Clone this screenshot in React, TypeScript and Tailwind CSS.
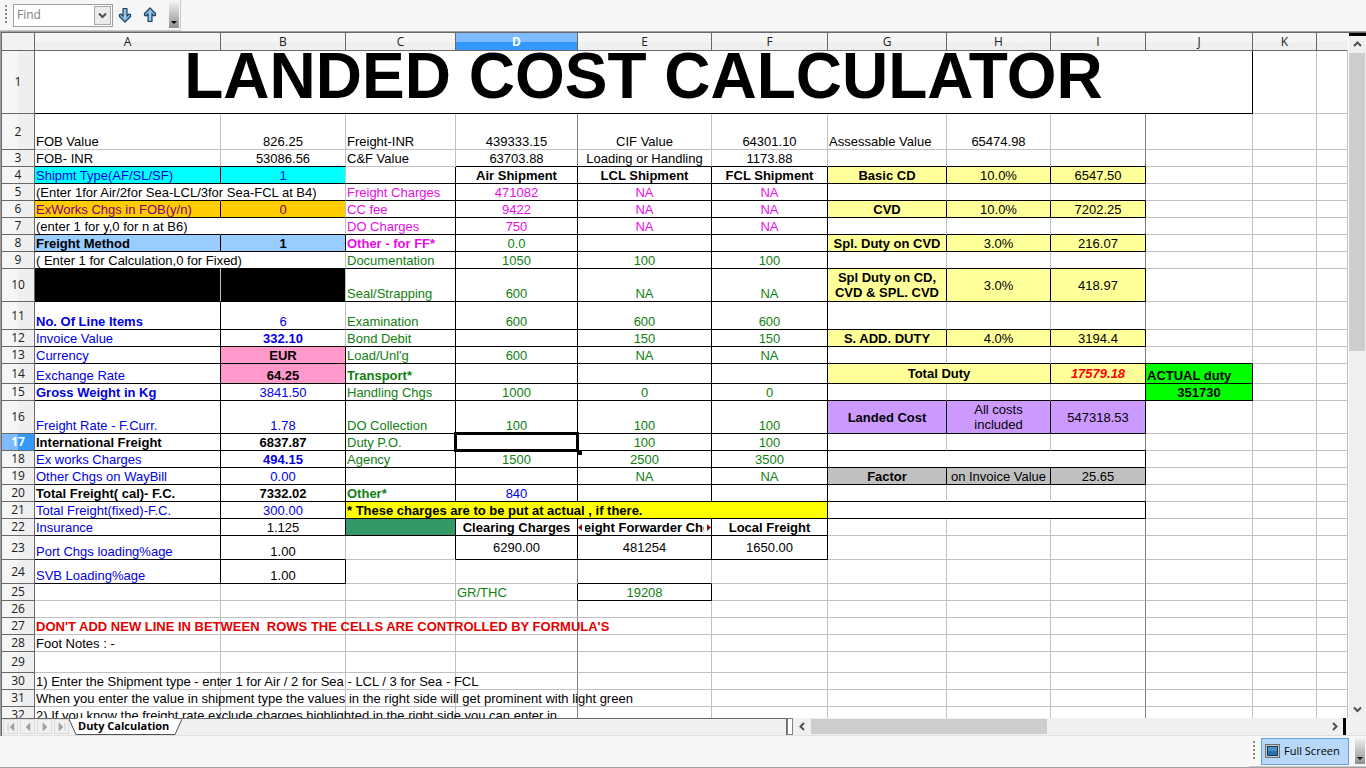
import { clsx } from "clsx"

type Cell = {
  text?: string
  className?: string
  span?: number
  cut?: boolean
  selected?: boolean
}

type Row = {
  height: string
  // one letter for each column A to L: k black, d dark grey, g grid grey, n none
  right: string
  bottom: string
  cells: Record<string, Cell>
}

const LETTERS = "ABCDEFGHIJKL"

const WIDTHS = [
  "w-[186px]", "w-[125px]", "w-[110px]", "w-[122px]", "w-[134px]", "w-[116px]",
  "w-[119px]", "w-[104px]", "w-[95px]", "w-[107px]", "w-[64px]", "",
]

const RIGHT: Record<string, string> = {
  k: "border-r-black",
  d: "border-r-[#808080]",
  g: "border-r-[#c0c0c0]",
  n: "border-r-transparent",
}

const BOTTOM: Record<string, string> = {
  k: "border-b-black",
  g: "border-b-[#c0c0c0]",
}

const H17 = "h-[17px]"
const H33 = "h-[33px]"

const BLUE = "text-[#0000e6]"
const GREEN = "text-[#108010]"
const PINK = "text-[#e80ce8]"
const MID = "align-middle text-center"
const YELLOW = "bg-[#ffff99] align-middle text-center"
const LILAC = "bg-[#cc99ff] align-middle text-center"
const GREY = "bg-[#c0c0c0] align-middle text-center"

const left = (text: string, className = ""): Cell => ({ text, className })
const mid = (text: string, className = ""): Cell => ({ text, className: clsx("text-center", className) })

const ALL = "kkkkkkkkkggg"
const NONE = "gggggggggggg"
const PLAIN = "gggdggggdggg"

const rows: Row[] = [
  {
    height: "h-[63px]", right: "kkkkkkkkkkgg", bottom: "kkkkkkkkkkgg",
    cells: { A: { text: "LANDED COST CALCULATOR", span: 10, className: "text-center align-top font-bold text-[64px] leading-[50px]" } },
  },
  {
    height: "h-[36px]", right: PLAIN, bottom: NONE,
    cells: {
      A: left("FOB Value"), B: mid("826.25"), C: left("Freight-INR"), D: mid("439333.15"),
      E: mid("CIF Value"), F: mid("64301.10"), G: left("Assessable Value"), H: mid("65474.98"),
    },
  },
  {
    height: H17, right: PLAIN, bottom: "kkgkkkkkkggg",
    cells: { A: left("FOB- INR"), B: mid("53086.56"), C: left("C&F Value"), D: mid("63703.88"), E: mid("Loading or Handling"), F: mid("1173.88") },
  },
  {
    height: H17, right: "kgkkkkkkkggg", bottom: ALL,
    cells: {
      A: left("Shipmt Type(AF/SL/SF)", clsx("bg-[#00ffff]", BLUE)), B: mid("1", clsx("bg-[#00ffff]", BLUE)),
      D: mid("Air Shipment", "font-bold"), E: mid("LCL Shipment", "font-bold"), F: mid("FCL Shipment", "font-bold"),
      G: mid("Basic CD", clsx(YELLOW, "font-bold")), H: mid("10.0%", YELLOW), I: mid("6547.50", YELLOW),
    },
  },
  {
    height: H17, right: "ngkkkkggdggg", bottom: ALL,
    cells: { A: left("(Enter 1for Air/2for Sea-LCL/3for Sea-FCL at B4)"), C: left("Freight Charges", PINK), D: mid("471082", PINK), E: mid("NA", PINK), F: mid("NA", PINK) },
  },
  {
    height: H17, right: "kgkkkkkkkggg", bottom: ALL,
    cells: {
      A: left("ExWorks Chgs in FOB(y/n)", "bg-[#ffcc00] text-[#800080]"), B: mid("0", "bg-[#ffcc00] text-[#800080]"),
      C: left("CC fee", PINK), D: mid("9422", PINK), E: mid("NA", PINK), F: mid("NA", PINK),
      G: mid("CVD", clsx(YELLOW, "font-bold")), H: mid("10.0%", YELLOW), I: mid("7202.25", YELLOW),
    },
  },
  {
    height: H17, right: "ngkkkkggdggg", bottom: ALL,
    cells: { A: left("(enter 1 for y,0 for n at B6)"), C: left("DO Charges", PINK), D: mid("750", PINK), E: mid("NA", PINK), F: mid("NA", PINK) },
  },
  {
    height: H17, right: "kkkkkkkkkggg", bottom: ALL,
    cells: {
      A: left("Freight Method", "bg-[#99ccff] font-bold"), B: mid("1", "bg-[#99ccff] font-bold"),
      C: left("Other - for FF*", clsx(PINK, "font-bold")), D: mid("0.0", GREEN),
      G: mid("Spl. Duty on CVD", clsx(YELLOW, "font-bold")), H: mid("3.0%", YELLOW), I: mid("216.07", YELLOW),
    },
  },
  {
    height: H17, right: "ngkkkkggdggg", bottom: ALL,
    cells: { A: left("( Enter 1 for Calculation,0 for Fixed)"), C: left("Documentation", GREEN), D: mid("1050", GREEN), E: mid("100", GREEN), F: mid("100", GREEN) },
  },
  {
    height: H33, right: "ggkkkkkkkggg", bottom: ALL,
    cells: {
      A: left("", "bg-black"), B: left("", "bg-black"),
      C: left("Seal/Strapping", GREEN), D: mid("600", GREEN), E: mid("NA", GREEN), F: mid("NA", GREEN),
      G: mid("Spl Duty on CD,\nCVD & SPL. CVD", clsx(YELLOW, "font-bold")), H: mid("3.0%", YELLOW), I: mid("418.97", YELLOW),
    },
  },
  {
    height: "h-[28px]", right: "kgkkkkggdggg", bottom: ALL,
    cells: { A: left("No. Of Line Items", clsx(BLUE, "font-bold")), B: mid("6", BLUE), C: left("Examination", GREEN), D: mid("600", GREEN), E: mid("600", GREEN), F: mid("600", GREEN) },
  },
  {
    height: H17, right: "kgkkkkkkkggg", bottom: ALL,
    cells: {
      A: left("Invoice Value", BLUE), B: mid("332.10", clsx(BLUE, "font-bold")), C: left("Bond Debit", GREEN), E: mid("150", GREEN), F: mid("150", GREEN),
      G: mid("S. ADD. DUTY", clsx(YELLOW, "font-bold")), H: mid("4.0%", YELLOW), I: mid("3194.4", YELLOW),
    },
  },
  {
    height: H17, right: "kkkkkkggdggg", bottom: "kkkkkkkkkkgg",
    cells: { A: left("Currency", BLUE), B: mid("EUR", "bg-[#ff99cc] font-bold"), C: left("Load/Unl'g", GREEN), D: mid("600", GREEN), E: mid("NA", GREEN), F: mid("NA", GREEN) },
  },
  {
    height: "h-[20px]", right: "kkkkkkkkkkgg", bottom: "kkkkkkkkkkgg",
    cells: {
      A: left("Exchange Rate", BLUE), B: mid("64.25", "bg-[#ff99cc] font-bold"), C: left("Transport*", clsx(GREEN, "font-bold")),
      G: { text: "Total Duty", span: 2, className: clsx(YELLOW, "font-bold") },
      I: mid("17579.18", clsx(YELLOW, "font-bold italic text-[#ff0000]")),
      J: left("ACTUAL duty", "bg-[#00ff00] font-bold"),
    },
  },
  {
    height: H17, right: "kkkkkkggkkgg", bottom: "kkkkkkkkkkgg",
    cells: {
      A: left("Gross Weight in Kg", clsx(BLUE, "font-bold")), B: mid("3841.50", BLUE), C: left("Handling Chgs", GREEN),
      D: mid("1000", GREEN), E: mid("0", GREEN), F: mid("0", GREEN), J: mid("351730", "bg-[#00ff00] font-bold"),
    },
  },
  {
    height: H33, right: "kkkkkkkkkggg", bottom: ALL,
    cells: {
      A: left("Freight Rate - F.Curr.", BLUE), B: mid("1.78", BLUE), C: left("DO Collection", GREEN), D: mid("100", GREEN), E: mid("100", GREEN), F: mid("100", GREEN),
      G: mid("Landed Cost", clsx(LILAC, "font-bold")), H: mid("All costs\nincluded", LILAC), I: mid("547318.53", LILAC),
    },
  },
  {
    height: H17, right: "kkkkkkggdggg", bottom: ALL,
    cells: { A: left("International Freight", "font-bold"), B: mid("6837.87", "font-bold"), C: left("Duty P.O.", GREEN), D: { selected: true }, E: mid("100", GREEN), F: mid("100", GREEN) },
  },
  {
    height: H17, right: "kkkkkkkkkggg", bottom: ALL,
    cells: {
      A: left("Ex works Charges", BLUE), B: mid("494.15", clsx(BLUE, "font-bold")), C: left("Agency", GREEN),
      D: mid("1500", GREEN), E: mid("2500", GREEN), F: mid("3500", GREEN), G: { span: 3 },
    },
  },
  {
    height: H17, right: "kkkkkkkkkggg", bottom: ALL,
    cells: {
      A: left("Other Chgs on WayBill", BLUE), B: mid("0.00", BLUE), E: mid("NA", GREEN), F: mid("NA", GREEN),
      G: mid("Factor", clsx(GREY, "font-bold")), H: mid("on Invoice Value", GREY), I: mid("25.65", GREY),
    },
  },
  {
    height: H17, right: "kkkkkkggdggg", bottom: ALL,
    cells: { A: left("Total Freight( cal)- F.C.", "font-bold"), B: mid("7332.02", "font-bold"), C: left("Other*", clsx(GREEN, "font-bold")), D: mid("840", BLUE) },
  },
  {
    height: H17, right: "kkkkkkkkkggg", bottom: ALL,
    cells: {
      A: left("Total Freight(fixed)-F.C.", BLUE), B: mid("300.00", BLUE),
      C: { text: "* These charges are to be put at actual , if there.", span: 4, className: "bg-[#ffff00] font-bold" }, G: { span: 3 },
    },
  },
  {
    height: H17, right: "kkkkkkggdggg", bottom: "kkkkkkgggggg",
    cells: {
      A: left("Insurance", BLUE), B: mid("1.125"), C: left("", "bg-[#339966]"), D: mid("Clearing Charges", "font-bold"),
      E: { text: "Freight Forwarder Chgs", cut: true, className: "font-bold" }, F: mid("Local Freight", "font-bold"),
    },
  },
  {
    height: "h-[24px]", right: "kgkkkkggdggg", bottom: "kkgkkkgggggg",
    cells: { A: left("Port Chgs loading%age", BLUE), B: mid("1.00"), D: mid("6290.00", MID), E: mid("481254", MID), F: mid("1650.00", MID) },
  },
  {
    height: "h-[24px]", right: "kkgdggggdggg", bottom: "kkggkggggggg",
    cells: { A: left("SVB Loading%age", BLUE), B: mid("1.00") },
  },
  { height: H17, right: "gggkkgggdggg", bottom: "ggggkggggggg", cells: { D: left("GR/THC", GREEN), E: mid("19208", GREEN) } },
  { height: H17, right: PLAIN, bottom: NONE, cells: {} },
  {
    height: H17, right: PLAIN, bottom: NONE,
    cells: { A: left("DON'T ADD NEW LINE IN BETWEEN  ROWS THE CELLS ARE CONTROLLED BY FORMULA'S", "font-bold text-[#e60000]") },
  },
  { height: H17, right: PLAIN, bottom: NONE, cells: { A: left("Foot Notes : -") } },
  { height: "h-[21px]", right: PLAIN, bottom: NONE, cells: {} },
  { height: H17, right: PLAIN, bottom: NONE, cells: { A: left("1) Enter the Shipment type - enter 1 for Air / 2 for Sea - LCL / 3 for Sea - FCL") } },
  { height: H17, right: PLAIN, bottom: NONE, cells: { A: left("When you enter the value in shipment type the values in the right side will get prominent with light green") } },
  { height: H17, right: PLAIN, bottom: NONE, cells: { A: left("2) If you know the freight rate exclude charges highlighted in the right side you can enter in") } },
]

const Arrow: React.FC<{ up?: boolean }> = ({ up }) => (
  <svg width="14" height="16" viewBox="0 0 14 16" className={up ? "" : "rotate-180"}>
    <path
      d="M7 1 L12.5 6.5 L12.5 8.5 L11 9 L9 7 L9 14.5 L5 14.5 L5 7 L3 9 L1.5 8.5 L1.5 6.5 Z"
      fill="#7db4dc" stroke="#1f4363" strokeWidth="1.2" strokeLinejoin="round"/>
    <path d="M7 3 L7 13" stroke="#b8dcf2" strokeWidth="1"/>
  </svg>
)

const Chevron: React.FC<{ d: string }> = ({ d }) => (
  <svg width="9" height="9" viewBox="0 0 9 9" fill="none" stroke="#505050" strokeWidth="2">
    <path d={d}/>
  </svg>
)

const Grip: React.FC = () => (
  <svg width="2" height="20" viewBox="0 0 2 20" fill="#8a8a8a">
    {[0, 4, 8, 12, 16].map(y => <rect key={y} y={y} width="2" height="2"/>)}
  </svg>
)

const MoreButton: React.FC = () => (
  <button aria-label="More" className="w-[10px] h-full flex items-end justify-center pb-1 bg-linear-to-b from-[#f0f0f0] to-[#909090]">
    <svg width="6" height="3" viewBox="0 0 6 3"><path d="M0 0 H6 L3 3 Z" fill="#000"/></svg>
  </button>
)

const FindBar: React.FC = () => (
  <div className="h-[31px] shrink-0 bg-[#f4f6f8] flex">
    <div className="flex items-center pl-[5px] pr-px bg-[#f6f6f6] border-r border-b border-[#c8c8c8]">
      <Grip/>
      <div className="ml-[6px] flex w-[100px] h-[23px] border border-[#a0a0a0] bg-white p-px">
        <input aria-label="Find" placeholder="Find" className="min-w-0 flex-1 pl-[2px] outline-none text-[12px] placeholder:text-[#808080]"/>
        <button aria-label="Find history" className="w-[17px] border border-[#a8a8a8] bg-[#ececec] flex items-center justify-center">
          <Chevron d="M1 2.5 L4.5 6 L8 2.5"/>
        </button>
      </div>
      <button aria-label="Find next" className="ml-[5px]"><Arrow/></button>
      <button aria-label="Find previous" className="ml-[11px] mr-[12px]"><Arrow up/></button>
      <div className="h-[26px]"><MoreButton/></div>
    </div>
  </div>
)

const CellBody: React.FC<{ cell: Cell }> = ({ cell }) => {
  if (cell.selected) {
    return (
      <>
        <div className="absolute -inset-[2px] border-[3px] border-black"/>
        <div className="absolute -right-[5px] -bottom-[5px] size-[5px] bg-black"/>
      </>
    )
  }
  if (cell.cut) {
    return (
      <div className="flex items-center">
        <svg width="4" height="7" viewBox="0 0 4 7" className="shrink-0"><path d="M4 0 V7 L0 3.5 Z" fill="#8b1010"/></svg>
        <div className="min-w-0 flex-1 mx-[3px] flex justify-center overflow-hidden"><span>{cell.text}</span></div>
        <svg width="4" height="7" viewBox="0 0 4 7" className="shrink-0"><path d="M0 0 V7 L4 3.5 Z" fill="#8b1010"/></svg>
      </div>
    )
  }
  return <>{cell.text}</>
}

const SheetRow: React.FC<{ row: Row, index: number }> = ({ row, index }) => {
  const cells = []
  for (let i = 0; i < LETTERS.length; i++) {
    const cell = row.cells[LETTERS[i]] ?? {}
    const span = cell.span ?? 1
    const last = i + span - 1
    cells.push(
      <td
        key={i}
        colSpan={span}
        className={clsx(
          "border-r border-b whitespace-pre",
          cell.cut ? "p-0" : "px-px py-0",
          !cell.className?.includes("align-") && "align-bottom",
          cell.selected && "relative",
          RIGHT[row.right[last]],
          BOTTOM[row.bottom[i]],
          cell.className,
        )}>
        <CellBody cell={cell}/>
      </td>
    )
    i = last
  }
  const active = index === 16
  return (
    <tr className={row.height}>
      <th
        scope="row"
        className={clsx(
          "p-0 border-r border-b border-[#696969] align-middle text-center text-[12px] leading-4 font-[Open_Sans,sans-serif]",
          active
            ? "bg-linear-to-r from-[#7fbcff] from-50% to-[#3399ff] to-50% text-white font-bold"
            : "bg-linear-to-r from-[#f6f6f6] from-50% to-[#efefef] to-50% font-normal text-[#202020]",
        )}>
        {index + 1}
      </th>
      {cells}
    </tr>
  )
}

const Sheet: React.FC = () => (
  <table className="w-full table-fixed border-separate border-spacing-0 bg-white text-black text-[13px] leading-[15px] font-[Liberation_Sans,Arial,sans-serif]">
    <colgroup>
      <col className="w-[33px]"/>
      {WIDTHS.map((width, i) => <col key={i} className={width}/>)}
    </colgroup>
    <thead>
      <tr className="h-[18px] text-[12px]">
        <td className="p-0 border-r border-b border-[#696969] bg-[#f2f2f2]"/>
        {LETTERS.split("").map(letter => (
          <th
            key={letter}
            scope="col"
            className={clsx(
              "p-0 border-r border-b border-[#696969] align-middle font-[Open_Sans,sans-serif]",
              letter === "L" && "border-r-transparent",
              letter === "D"
                ? "bg-linear-to-b from-[#7fbcff] from-50% to-[#3399ff] to-50% text-white font-bold"
                : "bg-linear-to-b from-[#f6f6f6] from-50% to-[#efefef] to-50% font-normal text-[#202020]",
            )}>
            {letter === "L" ? "" : letter}
          </th>
        ))}
      </tr>
    </thead>
    <tbody>
      {rows.map((row, index) => <SheetRow row={row} index={index} key={index}/>)}
    </tbody>
  </table>
)

const VerticalScroll: React.FC = () => (
  <div className="w-[18px] shrink-0 flex flex-col bg-[#f0f0f0] border-l border-white">
    <div className="h-[3px] shrink-0 bg-black"/>
    <button aria-label="Scroll up" className="h-[17px] shrink-0 flex items-center justify-center"><Chevron d="M1 6 L4.5 2.5 L8 6"/></button>
    <div className="flex-1">
      <div className="h-[46%] mr-px bg-[#cdcdcd]"/>
    </div>
    <button aria-label="Scroll down" className="h-[17px] shrink-0 flex items-center justify-center"><Chevron d="M1 2.5 L4.5 6 L8 2.5"/></button>
  </div>
)

const navIcons = [
  { label: "First sheet", d: "M1 0 V8 M7 0 L3 4 L7 8 Z" },
  { label: "Previous sheet", d: "M6 0 L2 4 L6 8 Z" },
  { label: "Next sheet", d: "M2 0 L6 4 L2 8 Z" },
  { label: "Last sheet", d: "M1 0 L5 4 L1 8 Z M7 0 V8" },
]

const SheetTabs: React.FC = () => (
  <div className="h-[18px] shrink-0 flex bg-[#f0f0f0] border-b border-[#e0e0e0]">
    <div className="w-[58%] flex">
      <div className="flex-1 min-w-0 flex border-t border-r border-[#696969]">
        <div className="flex gap-[2px] pl-px">
          {navIcons.map(icon => (
            <button key={icon.label} aria-label={icon.label} className="w-[15px] h-[15px] border border-[#dcdcdc] flex items-center justify-center">
              <svg width="8" height="8" viewBox="0 0 8 8" fill="#a0a0a0" stroke="#a0a0a0" strokeWidth="0.5"><path d={icon.d}/></svg>
            </button>
          ))}
        </div>
        <svg width="8" height="16" viewBox="0 0 8 16" className="shrink-0"><path d="M0 -1 H8 V16 H7 Z" fill="#fff"/><path d="M0 0 L7 15.5 H8" fill="none" stroke="#505050"/></svg>
        <button className="-mt-px bg-white border-b border-[#505050] pl-px pr-[5px] text-[11px] leading-4 font-bold whitespace-nowrap text-black">Duty Calculation</button>
        <svg width="8" height="16" viewBox="0 0 8 16" className="shrink-0"><path d="M0 -1 H8 L1 16 H0 Z" fill="#fff"/><path d="M8 0 L1 15.5 H0" fill="none" stroke="#505050"/></svg>
      </div>
      <div className="w-[6px] border border-[#808080] bg-white"/>
    </div>
    <div className="flex-1 min-w-0 flex">
      <button aria-label="Scroll left" className="w-[18px] flex items-center justify-center"><Chevron d="M6 1 L2.5 4.5 L6 8"/></button>
      <div className="flex-1">
        <div className="w-[46%] h-[15px] mt-px bg-[#cdcdcd]"/>
      </div>
      <button aria-label="Scroll right" className="w-[18px] flex items-center justify-center"><Chevron d="M3 1 L6.5 4.5 L3 8"/></button>
      <div className="w-[3px] bg-black"/>
      <div className="w-[20px]"/>
    </div>
  </div>
)

const FullScreenBar: React.FC = () => (
  <footer className="h-[32px] shrink-0 flex justify-end bg-[#f4f6f8] border-b border-[#a0a0a0]">
    <div className="flex items-center pl-[4px] pr-px bg-[#f8f8f8] border-b border-[#c8c8c8]">
      <Grip/>
      <button className="ml-[6px] mr-[6px] h-[27px] w-[88px] flex items-center gap-[4px] pl-[3px] border border-[#66a0dc] bg-[#b8d8f8] text-[11px] text-black whitespace-nowrap">
        <svg width="15" height="14" viewBox="0 0 15 14" className="shrink-0">
          <rect x="0.5" y="0.5" width="14" height="13" fill="#c8c8c8" stroke="#707070"/>
          <rect x="2.5" y="2.5" width="10" height="9" fill="#2a70ae" stroke="#183858"/>
          <path d="M3 3 H12 V7 H3 Z" fill="#4a92cc"/>
        </svg>
        Full Screen
      </button>
      <div className="h-[26px]"><MoreButton/></div>
    </div>
  </footer>
)

const App: React.FC = () => {
  return (
    <div className="h-screen flex flex-col overflow-hidden bg-[#f4f6f8] font-[Open_Sans,sans-serif]">
      <FindBar/>
      <main className="flex-1 min-h-0 flex flex-col border-t border-l border-[#a0a0a0]">
        <div className="flex-1 min-h-0 flex flex-col border-t border-l border-[#696969]">
          <div className="flex-1 min-h-0 flex">
            <div className="flex-1 min-w-0 overflow-hidden bg-white"><Sheet/></div>
            <VerticalScroll/>
          </div>
          <SheetTabs/>
        </div>
      </main>
      <FullScreenBar/>
    </div>
  )
}

export default App
